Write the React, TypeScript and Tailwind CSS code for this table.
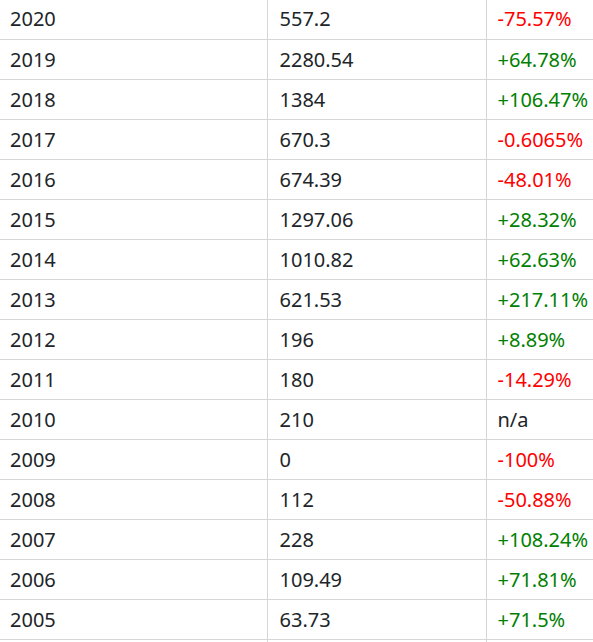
import React from "react";

const rows: [string, string, string][] = [
  ["2020", "557.2", "-75.57%"],
  ["2019", "2280.54", "+64.78%"],
  ["2018", "1384", "+106.47%"],
  ["2017", "670.3", "-0.6065%"],
  ["2016", "674.39", "-48.01%"],
  ["2015", "1297.06", "+28.32%"],
  ["2014", "1010.82", "+62.63%"],
  ["2013", "621.53", "+217.11%"],
  ["2012", "196", "+8.89%"],
  ["2011", "180", "-14.29%"],
  ["2010", "210", "n/a"],
  ["2009", "0", "-100%"],
  ["2008", "112", "-50.88%"],
  ["2007", "228", "+108.24%"],
  ["2006", "109.49", "+71.81%"],
  ["2005", "63.73", "+71.5%"],
];

const changeColor = (v: string) => {
  if (v.startsWith("-")) return "text-[#ff0000]";
  if (v.startsWith("+")) return "text-[#008000]";
  return "text-[#212529]";
};

export default function App() {
  return (
    <div className="w-[593px] h-[642px] overflow-hidden bg-white">
      <table
        className="-mt-px w-[594px] border-collapse text-[20px] text-[#212529]"
        style={{ fontFamily: '"Noto Sans", "Open Sans", sans-serif' }}
      >
        <tbody>
          {rows.map(([year, price, change]) => (
            <tr key={year} className="h-[40px] border-b border-[#d6d6d6]">
              <td className="w-[267px] pl-[10px] pt-px align-middle">{year}</td>
              <td className="w-[219px] pl-[12px] pt-px border-l border-[#d6d6d6] align-middle">
                {price}
              </td>
              <td
                className={`pl-[11px] pt-px border-l border-[#d6d6d6] align-middle ${changeColor(change)}`}
              >
                {change}
              </td>
            </tr>
          ))}
          <tr className="h-[40px]">
            <td className="w-[267px]" />
            <td className="border-l border-[#d6d6d6]" />
            <td className="border-l border-[#d6d6d6]" />
          </tr>
        </tbody>
      </table>
    </div>
  );
}
